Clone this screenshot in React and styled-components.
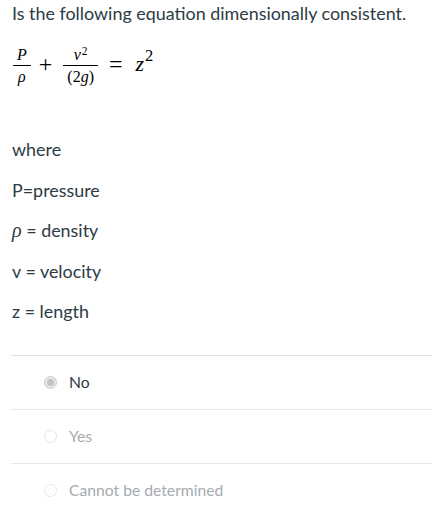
import React from "react";
import styled, { createGlobalStyle } from "styled-components";

const Global = createGlobalStyle`
  html, body { margin: 0; padding: 0; background: #fff; }
  body { font-family: Lato, "Noto Sans", sans-serif; color: #2d3b45; }
`;

const Page = styled.div`
  width: 432px;
  padding: 0 0 0 12px;
  box-sizing: border-box;
`;

const Text = styled.p`
  margin: 0 0 ${(p) => (p.$gap ?? 13.6)}px;
  font-size: 17.9px;
  line-height: 27px;
`;

const MathRow = styled.div`
  display: flex;
  align-items: center;
  height: 44px;
  margin: 15px 0 50px;
  padding-left: 1px;
  font-family: "Liberation Serif", "DejaVu Serif", serif;
  font-size: 22px;
  color: #000;
`;

const Frac = styled.span`
  display: inline-flex;
  flex-direction: column;
  align-items: stretch;
  font-size: 16px;
  line-height: 1;
  margin-top: 4px;
`;

const Num = styled.span`
  text-align: center;
  padding: 0 ${(p) => p.$pad ?? 3}px 2px;
  font-style: italic;
`;

const Den = styled.span`
  text-align: center;
  border-top: 1px solid #000;
  padding: 3px ${(p) => p.$pad ?? 3}px 0;
`;

const Op = styled.span`
  margin: 0 ${(p) => p.$r ?? 10}px 0 ${(p) => p.$l ?? 10}px;
  font-size: 24px;
  line-height: 1;
`;

const Var = styled.i`
  font-style: italic;
`;

const Sup = styled.sup`
  font-style: normal;
  font-size: ${(p) => p.$size || 0.7}em;
  vertical-align: ${(p) => p.$lift || 0.55}em;
  line-height: 0;
  margin-left: 1px;
`;

const Greek = styled.i`
  font-family: "Liberation Serif", "DejaVu Serif", serif;
  font-style: italic;
  font-size: 20px;
`;

const Options = styled.div`
  margin-top: 29.4px;
  margin-left: -1px;
  border-top: 1px solid #dfe1e3;
`;

const Option = styled.label`
  display: flex;
  align-items: center;
  height: 53px;
  padding-left: 33px;
  border-bottom: 1px solid #e4e6e8;
  font-size: 15.7px;
  color: ${(p) => (p.$selected ? "#2d3b45" : "#a5abb0")};
`;

const Radio = styled.span`
  width: 13px;
  height: 13px;
  box-sizing: border-box;
  border-radius: 50%;
  border: 1px solid ${(p) => (p.$checked ? "#c9cccf" : "#e3e5e7")};
  background: ${(p) => (p.$checked ? "#e6e7e8" : "#fff")};
  display: flex;
  align-items: center;
  justify-content: center;
  margin-right: 12px;
  &::after {
    content: "";
    display: ${(p) => (p.$checked ? "block" : "none")};
    width: 7px;
    height: 7px;
    border-radius: 50%;
    background: #c2c5c8;
  }
`;

const options = [
  { label: "No", checked: true },
  { label: "Yes" },
  { label: "Cannot be determined" },
];

export default function App() {
  return (
    <Page>
      <Global />
      <Text $gap={0}>Is the following equation dimensionally consistent.</Text>
      <MathRow>
        <Frac>
          <Num $pad={4}>P</Num>
          <Den $pad={4}>
            <Var>ρ</Var>
          </Den>
        </Frac>
        <Op $l={8} $r={11}>+</Op>
        <Frac>
          <Num $pad={4}>
            v<Sup $size={0.72} $lift={0.45}>2</Sup>
          </Num>
          <Den $pad={4}>
            (2<Var>g</Var>)
          </Den>
        </Frac>
        <Op $l={11} $r={13}>=</Op>
        <Var>
          z<Sup $size={0.75} $lift={0.6}>2</Sup>
        </Var>
      </MathRow>
      <Text>where</Text>
      <Text>P=pressure</Text>
      <Text>
        <Greek>ρ</Greek> = density
      </Text>
      <Text>v = velocity</Text>
      <Text>z = length</Text>
      <Options>
        {options.map((o) => (
          <Option key={o.label} $selected={o.checked}>
            <Radio $checked={o.checked} />
            {o.label}
          </Option>
        ))}
      </Options>
    </Page>
  );
}
